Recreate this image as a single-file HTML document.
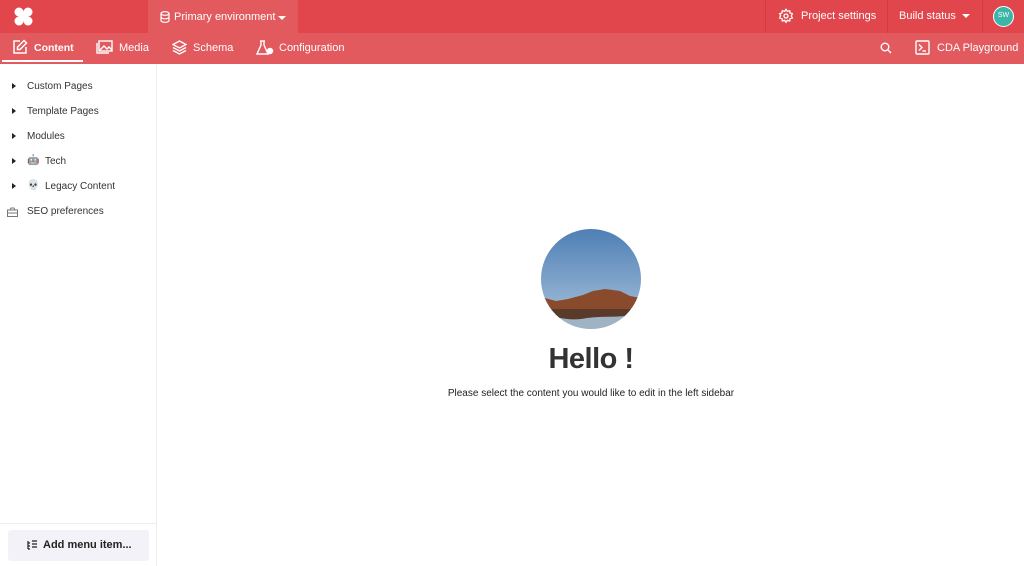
<!DOCTYPE html>
<html><head><meta charset="utf-8"><style>
*{box-sizing:border-box;margin:0;padding:0}
body{width:1024px;height:566px;overflow:hidden;font-family:"Liberation Sans",sans-serif;background:#fff;position:relative;color:#222}
.r1{position:absolute;left:0;top:0;width:1024px;height:33px;background:#e0464b}
.r2{position:absolute;left:0;top:33px;width:1024px;height:31px;background:#e35a5e}
.t{position:absolute;color:#fff;font-size:11px;white-space:nowrap}
.sep{position:absolute;top:0;width:1px;height:33px;background:#d23c41}
.side{position:absolute;left:0;top:64px;width:157px;height:502px;border-right:1px solid #eee}
.it{position:absolute;left:27px;font-size:10px;color:#333}
.tri{position:absolute;left:12px;width:0;height:0;border-left:4px solid #222;border-top:3px solid transparent;border-bottom:3px solid transparent}
</style></head><body>
<div class="r1"></div>
<div style="position:absolute;left:148px;top:0;width:150px;height:33px;background:#e35a5e"></div>
<svg style="position:absolute;left:14px;top:7px" width="19" height="19" viewBox="0 0 19 19" fill="#fff"><circle cx="5" cy="5" r="4.5"/><circle cx="14" cy="5" r="4.5"/><circle cx="5" cy="14" r="4.5"/><circle cx="14" cy="14" r="4.5"/><rect x="5" y="5" width="9" height="9"/></svg>
<svg style="position:absolute;left:160px;top:11px" width="10" height="12" viewBox="0 0 10 12" fill="none" stroke="#fff" stroke-width="1.2"><ellipse cx="5" cy="2.5" rx="4" ry="1.8"/><path d="M1 2.5v7c0 1 1.8 1.8 4 1.8s4-.8 4-1.8v-7M1 6c0 1 1.8 1.8 4 1.8S9 7 9 6"/></svg>
<div class="t" style="left:174px;top:11px">Primary environment</div>
<div style="position:absolute;left:278px;top:16px;border-top:4px solid #fff;border-left:4px solid transparent;border-right:4px solid transparent"></div>
<div class="sep" style="left:765px"></div><div class="sep" style="left:887px"></div><div class="sep" style="left:982px"></div>
<svg style="position:absolute;left:778px;top:8px" width="16" height="16" viewBox="0 0 24 24" fill="none" stroke="#fff" stroke-width="2"><circle cx="12" cy="12" r="3"/><path d="M12 2l2 3 3.5-1 .5 3.5 3.5 1-1.5 3.5 1.5 3-3.5 1-.5 3.5-3.5-1-2 3-2-3-3.5 1-.5-3.5-3.5-1 1.5-3.5L2.5 8.5 6 7.5 6.5 4l3.5 1z"/></svg>
<div class="t" style="left:801px;top:10px">Project settings</div>
<div class="t" style="left:899px;top:10px">Build status</div>
<div style="position:absolute;left:962px;top:14px;border-top:4px solid #fff;border-left:4px solid transparent;border-right:4px solid transparent"></div>
<div style="position:absolute;left:993px;top:6px;width:21px;height:21px;border-radius:50%;background:#3cb6a6;border:1.5px solid #fff;color:#fff;font-size:7px;text-align:center;line-height:18px">SW</div>
<div class="r2"></div>
<div style="position:absolute;left:2px;top:60px;width:81px;height:2px;background:#fff"></div>
<svg style="position:absolute;left:12px;top:39px" width="16" height="16" viewBox="0 0 16 16" fill="none" stroke="#fff" stroke-width="1.5"><path d="M8 2H2v12h12V8"/><path d="M12 1.5l2.5 2.5L8 10.5H5.5V8z"/></svg>
<div class="t" style="left:34px;top:42px;font-weight:bold;font-size:10.5px">Content</div>
<svg style="position:absolute;left:96px;top:40px" width="17" height="14" viewBox="0 0 17 14" fill="none" stroke="#fff" stroke-width="1.4"><rect x="3" y="1" width="13" height="10"/><path d="M1 3v10h12M4 10l4-4 3 3 2-2 3 3"/></svg>
<div class="t" style="left:119px;top:42px">Media</div>
<svg style="position:absolute;left:172px;top:40px" width="15" height="15" viewBox="0 0 15 15" fill="none" stroke="#fff" stroke-width="1.4"><path d="M7.5 1L14 4.5 7.5 8 1 4.5z M1 7.5l6.5 3.5 6.5-3.5 M1 10.5L7.5 14 14 10.5"/></svg>
<div class="t" style="left:193px;top:42px">Schema</div>
<svg style="position:absolute;left:256px;top:40px" width="18" height="15" viewBox="0 0 18 15" fill="none" stroke="#fff" stroke-width="1.4"><path d="M4 1h5M5 1v4L1 14h11L8 5V1"/><circle cx="14" cy="11" r="2.5" fill="#fff"/></svg>
<div class="t" style="left:279px;top:42px">Configuration</div>
<svg style="position:absolute;left:880px;top:42px" width="12" height="12" viewBox="0 0 12 12" fill="none" stroke="#fff" stroke-width="1.4"><circle cx="5" cy="5" r="3.8"/><path d="M8 8l3 3"/></svg>
<svg style="position:absolute;left:915px;top:40px" width="15" height="15" viewBox="0 0 15 15" fill="none" stroke="#fff" stroke-width="1.4"><rect x="1" y="1" width="13" height="13" rx="1"/><path d="M4 4.5l3 3-3 3M7.5 11h3.5"/></svg>
<div class="t" style="left:937px;top:42px">CDA Playground</div>
<div class="side">
<div class="tri" style="top:19px"></div><div class="it" style="top:17px">Custom Pages</div>
<div class="tri" style="top:44px"></div><div class="it" style="top:42px">Template Pages</div>
<div class="tri" style="top:69px"></div><div class="it" style="top:67px">Modules</div>
<div class="tri" style="top:94px"></div><div class="it" style="top:91px;font-size:10px">🤖</div><div class="it" style="left:45px;top:92px">Tech</div>
<div class="tri" style="top:119px"></div><div class="it" style="top:116px;font-size:10px">💀</div><div class="it" style="left:45px;top:117px">Legacy Content</div>
<svg style="position:absolute;left:7px;top:143px" width="11" height="10" viewBox="0 0 11 10" fill="none" stroke="#777" stroke-width="1"><rect x="0.5" y="3" width="10" height="6.5"/><path d="M3 3l1-2h3l1 2M0.5 6h10"/></svg>
<div class="it" style="top:142px">SEO preferences</div>
<div style="position:absolute;left:0;top:459px;width:156px;height:1px;background:#eee"></div>
<div style="position:absolute;left:8px;top:466px;width:141px;height:31px;background:#f3f2f8;border-radius:3px"></div>
<svg style="position:absolute;left:27px;top:476px" width="11" height="10" viewBox="0 0 11 10" fill="none" stroke="#222" stroke-width="1.2"><path d="M1 1v8M1 3h2M1 6h2M1 9h2M5 1h5M5 4h5M5 7h5"/></svg>
<div class="it" style="left:43px;top:475px;font-size:11px;font-weight:bold;color:#222">Add menu item...</div>
</div>
<svg style="position:absolute;left:541px;top:229px" width="100" height="100" viewBox="0 0 100 100"><defs><clipPath id="c"><circle cx="50" cy="50" r="50"/></clipPath><linearGradient id="s" x1="0" y1="0" x2="0" y2="1"><stop offset="0" stop-color="#4f7fb5"/><stop offset="1" stop-color="#a9c4dc"/></linearGradient></defs><g clip-path="url(#c)"><rect width="100" height="100" fill="url(#s)"/><path d="M0 68l15 4 12-2 15-4 10-4 12-2 15 2 10 5 11 2v20H0z" fill="#8a4a2c"/><rect y="80" width="100" height="20" fill="#9fb3c4"/><path d="M0 80h100v4c-20 6-40 2-60 6-15 2-30-4-40-4z" fill="#5a3a2a"/></g></svg>
<div style="position:absolute;left:0;width:1182px;top:343px;text-align:center;font-size:29px;font-weight:bold;color:#333;letter-spacing:-0.5px">Hello !</div>
<div style="position:absolute;left:0;width:1182px;top:388px;text-align:center;font-size:10px;color:#222">Please select the content you would like to edit in the left sidebar</div>
</body></html>
